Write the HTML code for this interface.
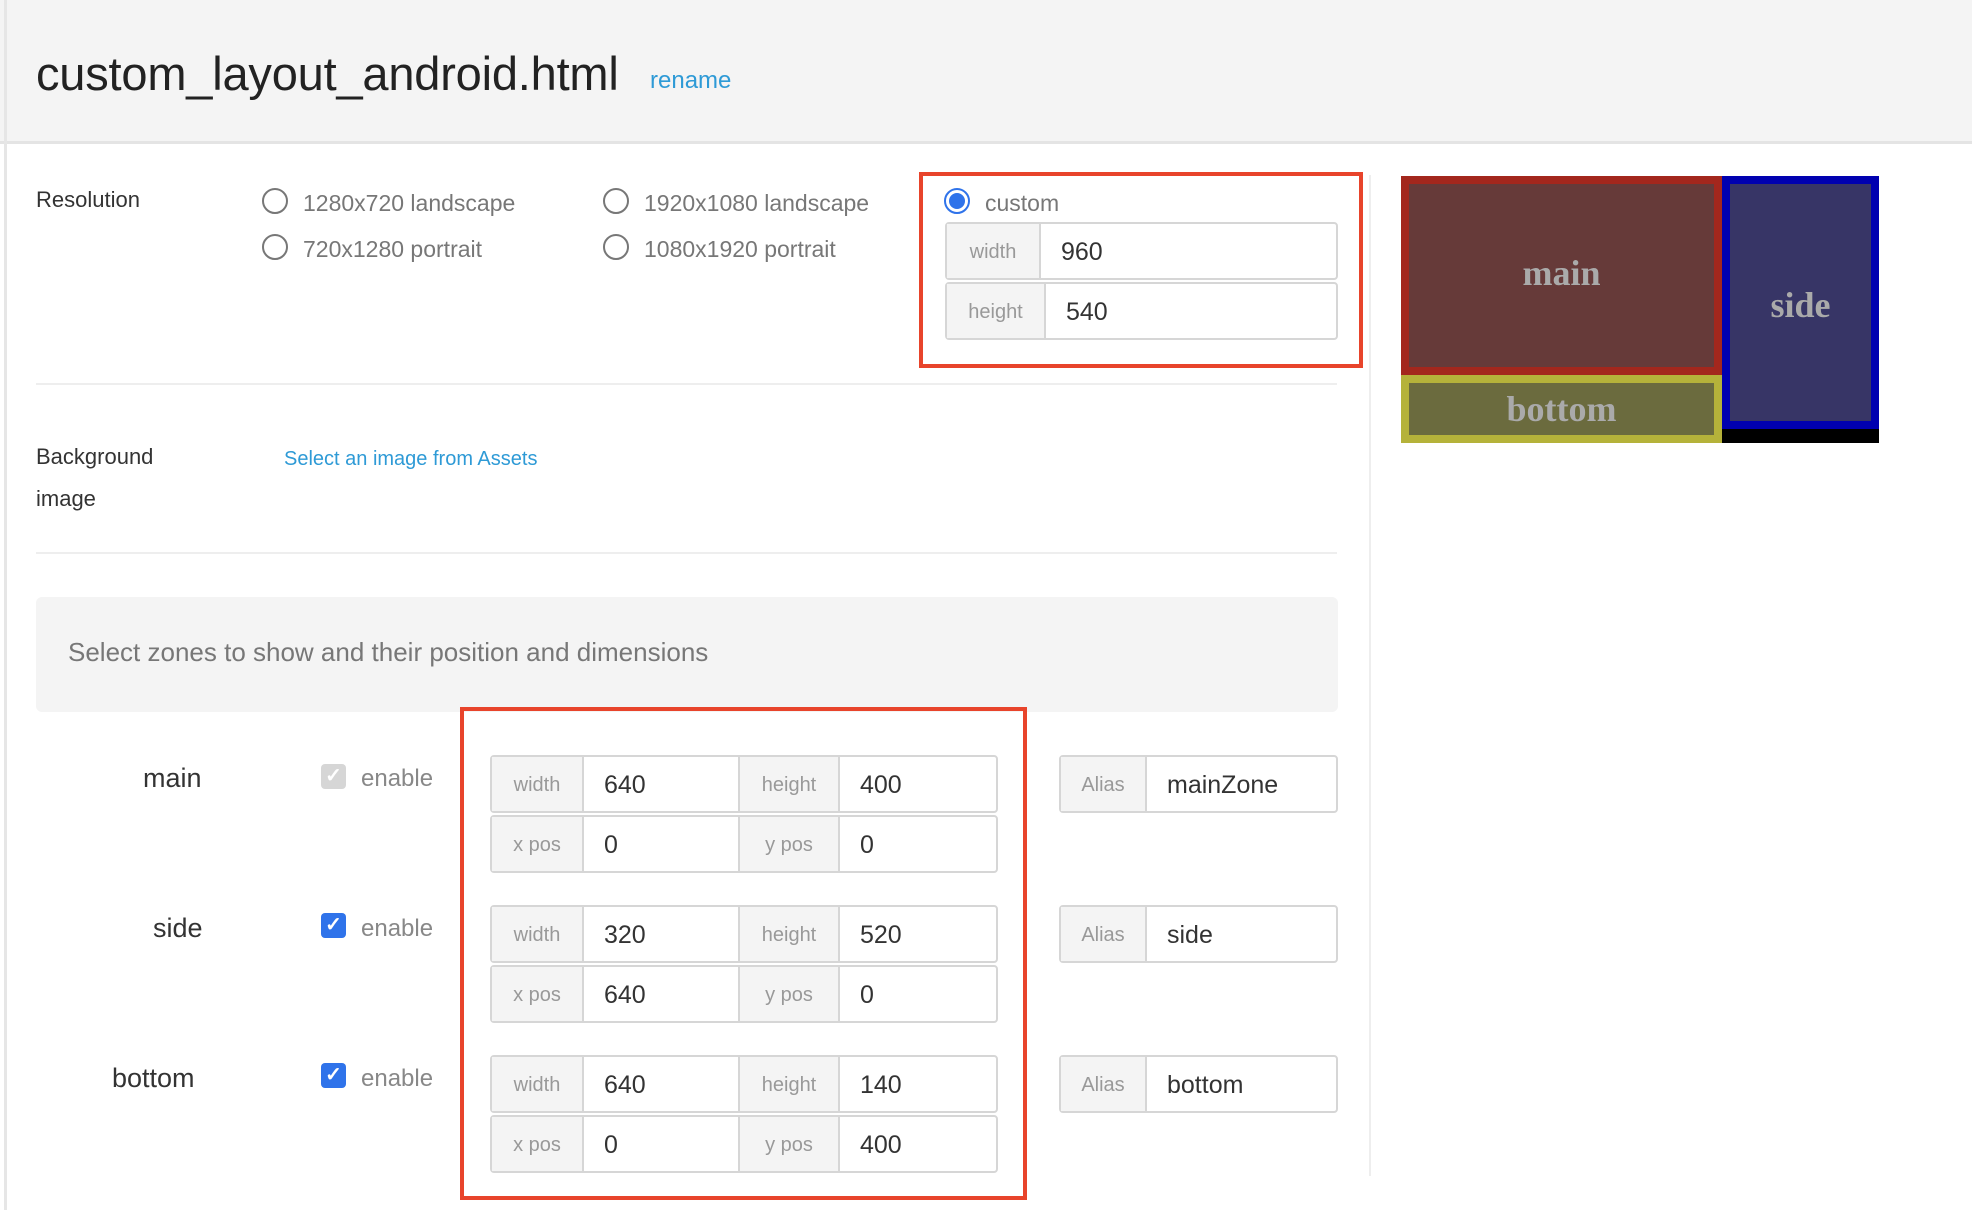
<!DOCTYPE html>
<html><head><meta charset="utf-8"><style>
*{box-sizing:border-box;margin:0;padding:0}
body{width:1972px;height:1210px;position:relative;overflow:hidden;background:#fff;font-family:"Liberation Sans",sans-serif;color:#333}
.a{position:absolute;white-space:nowrap}
.hdr{left:0;top:0;width:1972px;height:144px;background:#f4f4f4;border-bottom:3px solid #e4e4e4}
.lb{left:4px;top:0;width:3px;height:1210px;background:#e6e6e6}
.radio{width:26px;height:26px;border:2px solid #777;border-radius:50%}
.rt{font-size:23px;color:#777}
.grp{position:absolute;height:58px;border:2px solid #d6d6d6;border-radius:4px;background:#fff;display:flex}
.ad{background:#f4f4f4;color:#999;font-size:20px;display:flex;align-items:center;justify-content:center;border-right:2px solid #d6d6d6;height:100%;padding-top:3px}
.in{font-size:25px;color:#333;display:flex;align-items:center;padding-left:20px;height:100%;padding-top:2px}
.zl{font-size:27px;color:#333}
.cb{width:25px;height:25px;border-radius:4px;background:#2f73ea;color:#fff;font-size:20px;text-align:center;line-height:25px;font-weight:bold}
.en{font-size:24px;color:#888}
.hr{height:2px;background:#eee}
.red{border:4px solid #e8442b}
.pv{position:absolute;display:flex;align-items:center;justify-content:center;font-family:"Liberation Serif",serif;font-weight:bold;font-size:36px;color:#aaa}
</style></head><body>
<div class="a hdr"></div>
<div class="a lb"></div>
<div class="a" style="left:36px;top:46px;font-size:47px;letter-spacing:-0.2px;color:#222">custom_layout_android.html</div>
<div class="a" style="left:650px;top:67px;font-size:24px;color:#2e9ad6">rename</div>

<div class="a" style="left:36px;top:187px;font-size:22px">Resolution</div>
<div class="a radio" style="left:262px;top:188px"></div><div class="a rt" style="left:303px;top:190px">1280x720 landscape</div>
<div class="a radio" style="left:262px;top:234px"></div><div class="a rt" style="left:303px;top:236px">720x1280 portrait</div>
<div class="a radio" style="left:603px;top:188px"></div><div class="a rt" style="left:644px;top:190px">1920x1080 landscape</div>
<div class="a radio" style="left:603px;top:234px"></div><div class="a rt" style="left:644px;top:236px">1080x1920 portrait</div>

<div class="a red" style="left:919px;top:172px;width:444px;height:196px"></div>
<div class="a radio" style="left:944px;top:188px;border-color:#2f73ea"><div style="position:absolute;left:3px;top:3px;width:16px;height:16px;border-radius:50%;background:#2f73ea"></div></div>
<div class="a rt" style="left:985px;top:190px">custom</div>
<div class="grp" style="left:945px;top:222px;width:393px"><div class="ad" style="width:94px">width</div><div class="in">960</div></div>
<div class="grp" style="left:945px;top:282px;width:393px"><div class="ad" style="width:99px">height</div><div class="in">540</div></div>

<div class="a hr" style="left:36px;top:383px;width:1301px"></div>
<div class="a" style="left:1369px;top:175px;width:2px;height:1001px;background:#eee"></div>

<div class="pv" style="left:1401px;top:176px;width:321px;height:199px;background:#663a39;border:8px solid #a3271d;padding-bottom:5px">main</div>
<div class="pv" style="left:1401px;top:375px;width:321px;height:68px;background:#6b6b3e;border:8px solid #b5b23a">bottom</div>
<div class="a" style="left:1722px;top:176px;width:157px;height:267px;background:#000"></div>
<div class="pv" style="left:1722px;top:176px;width:157px;height:253px;background:#373566;border:8px solid #0000b0;padding-top:4px">side</div>

<div class="a" style="left:36px;top:436px;font-size:22px;line-height:42px;color:#333">Background<br>image</div>
<div class="a" style="left:284px;top:448px;font-size:20px;color:#2e9ad6">Select an image from Assets</div>
<div class="a hr" style="left:36px;top:552px;width:1301px"></div>

<div class="a" style="left:36px;top:597px;width:1302px;height:115px;background:#f4f4f4;border-radius:6px"></div>
<div class="a" style="left:68px;top:637px;font-size:26px;color:#777">Select zones to show and their position and dimensions</div>

<div class="a red" style="left:460px;top:707px;width:567px;height:493px"></div>

<div class="a zl" style="left:143px;top:763px">main</div>
<div class="a cb" style="left:321px;top:764px;background:#d6d6d6">✓</div><div class="a en" style="left:361px;top:765px">enable</div>
<div class="grp" style="left:490px;top:755px;width:508px"><div class="ad" style="width:92px">width</div><div class="in" style="width:156px;border-right:2px solid #d6d6d6">640</div><div class="ad" style="width:100px">height</div><div class="in">400</div></div>
<div class="grp" style="left:490px;top:815px;width:508px"><div class="ad" style="width:92px">x pos</div><div class="in" style="width:156px;border-right:2px solid #d6d6d6">0</div><div class="ad" style="width:100px">y pos</div><div class="in">0</div></div>
<div class="grp" style="left:1059px;top:755px;width:279px"><div class="ad" style="width:86px">Alias</div><div class="in">mainZone</div></div>

<div class="a zl" style="left:153px;top:913px">side</div>
<div class="a cb" style="left:321px;top:913px">✓</div><div class="a en" style="left:361px;top:915px">enable</div>
<div class="grp" style="left:490px;top:905px;width:508px"><div class="ad" style="width:92px">width</div><div class="in" style="width:156px;border-right:2px solid #d6d6d6">320</div><div class="ad" style="width:100px">height</div><div class="in">520</div></div>
<div class="grp" style="left:490px;top:965px;width:508px"><div class="ad" style="width:92px">x pos</div><div class="in" style="width:156px;border-right:2px solid #d6d6d6">640</div><div class="ad" style="width:100px">y pos</div><div class="in">0</div></div>
<div class="grp" style="left:1059px;top:905px;width:279px"><div class="ad" style="width:86px">Alias</div><div class="in">side</div></div>

<div class="a zl" style="left:112px;top:1063px">bottom</div>
<div class="a cb" style="left:321px;top:1063px">✓</div><div class="a en" style="left:361px;top:1065px">enable</div>
<div class="grp" style="left:490px;top:1055px;width:508px"><div class="ad" style="width:92px">width</div><div class="in" style="width:156px;border-right:2px solid #d6d6d6">640</div><div class="ad" style="width:100px">height</div><div class="in">140</div></div>
<div class="grp" style="left:490px;top:1115px;width:508px"><div class="ad" style="width:92px">x pos</div><div class="in" style="width:156px;border-right:2px solid #d6d6d6">0</div><div class="ad" style="width:100px">y pos</div><div class="in">400</div></div>
<div class="grp" style="left:1059px;top:1055px;width:279px"><div class="ad" style="width:86px">Alias</div><div class="in">bottom</div></div>
</body></html>
